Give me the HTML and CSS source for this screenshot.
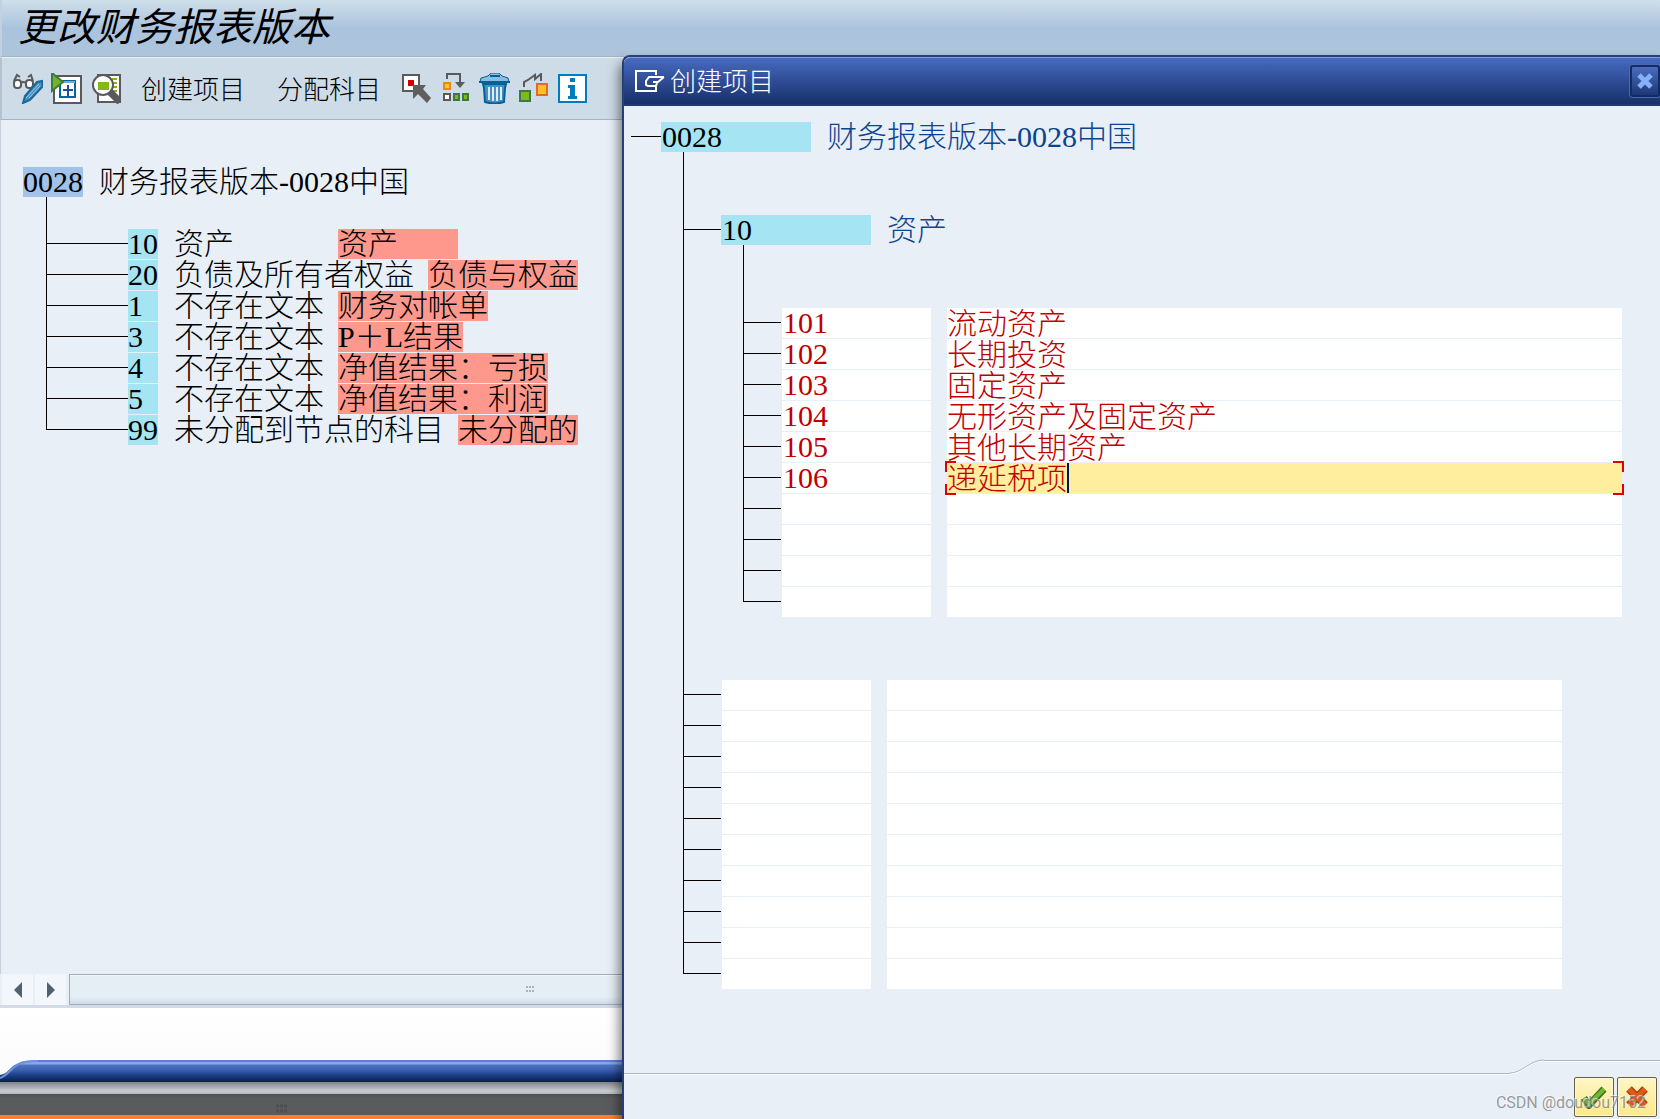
FILE: index.html
```html
<!DOCTYPE html>
<html lang="zh-CN">
<head>
    <meta charset="UTF-8">
    <meta name="viewport" content="width=device-width, initial-scale=1.0">
    <title>更改财务报表版本</title>
    <link rel="stylesheet" href="styles.css">
</head>
<body>
    <!-- Main window -->
    <main class="window">
        <h1 class="window-title">更改财务报表版本</h1>
        <div class="toolbar">
            <button type="button" class="icon-button" aria-label="显示/更改">
                <svg width="31" height="31" viewBox="0 0 31 31" fill="none">
                    <g stroke="#5a5a5a" stroke-width="2"><rect x="2" y="7" width="7" height="8" rx="3" fill="#fff"/><rect x="14" y="7" width="7" height="8" rx="3" fill="#fff"/><path d="M9 10q2-2 5 0M2 8l3-6 3 2M21 8l-2-6-3 2"/></g>
                    <path d="M11 30l2-7L25 9l5-1 1 5-13 14z" fill="#4a90bf" stroke="#1a679c" stroke-width="2"/>
                    <path d="M14 25L27 11M17 25l11-12" stroke="#9cc9e4"/>
                </svg>
            </button>
            <button type="button" class="icon-button" aria-label="展开">
                <svg width="31" height="31" viewBox="0 0 31 31">
                    <path d="M3 3h27v27H3z" fill="#fff" stroke="#5a5a5a" stroke-width="2"/>
                    <path d="M9 8h15v16H9z" fill="#fff" stroke="#0068a0" stroke-width="2"/>
                    <path d="M9 8h15v2H9z" fill="#7da7d9"/>
                    <path d="M16 12h2v4h4v2h-4v5h-2v-5h-4v-2h4z" fill="#1d4fa0"/>
                    <path d="M1 0l11 9L1 18z" fill="#72b32a" stroke="#3f7a3f" stroke-width="2"/>
                </svg>
            </button>
            <button type="button" class="icon-button" aria-label="查找">
                <svg width="31" height="31" viewBox="0 0 31 31">
                    <path d="M8 2h22v27H8z" fill="#fff" stroke="#5a5a5a" stroke-width="2"/>
                    <path d="M22 6h5M22 10h5M22 14h5M22 18h5" stroke="#83b81a" stroke-width="2"/>
                    <path d="M19 18l11 11" stroke="#5a5a5a" stroke-width="7"/>
                    <circle cx="13" cy="12" r="10" fill="#fff" stroke="#5a5a5a" stroke-width="2"/>
                    <path d="M8 9h11v8H8z" fill="#83b81a"/>
                </svg>
            </button>
            <button type="button" class="text-button">创建项目</button>
            <button type="button" class="text-button">分配科目</button>
            <button type="button" class="icon-button" aria-label="选择">
                <svg width="31" height="31" viewBox="0 0 31 31">
                    <path d="M2 2h16v16H2z" fill="#fff" stroke="#5a5a5a" stroke-width="2"/>
                    <path d="M7 7h6v6H7z" fill="#d00000"/>
                    <path d="M12 12h13l-3 4 8 9-4 5-9-9-5 5z" fill="#5f5f5f"/>
                </svg>
            </button>
            <button type="button" class="icon-button" aria-label="重新分配">
                <svg width="31" height="31" viewBox="0 0 31 31" fill="none">
                    <path d="M7 6V1h13v9" stroke="#5a5a5a" stroke-width="2"/>
                    <path d="M15 9h10l-5 6z" fill="#5a5a5a"/>
                    <path d="M4 10h6v6H4z" fill="#ffc830" stroke="#ef8a00" stroke-width="2"/>
                    <path d="M4 21h6v6H4z" fill="#fff" stroke="#5a5a5a" stroke-width="2"/>
                    <path d="M14 21h5v6h-5zM23 21h5v6h-5z" fill="#83b81a" stroke="#3a7a3a" stroke-width="2"/>
                </svg>
            </button>
            <button type="button" class="icon-button" aria-label="删除">
                <svg width="31" height="31" viewBox="0 0 31 31">
                    <path d="M4 11h23l-1 4-1 14q-9 3-19 0L5 15z" fill="#4b8fc0" stroke="#00629b" stroke-width="2"/>
                    <path d="M10 14v13M14 14v14M18 14v14M22 14v13" stroke="#d9eefa" stroke-width="2"/>
                    <path d="M1 9l1-4 7-2 3-3h8l3 3 6 2 1 4z" fill="#8fbbdc" stroke="#00629b" stroke-width="1"/>
                    <path d="M0 9h31M11 3h10" stroke="#00629b" stroke-width="2"/>
                </svg>
            </button>
            <button type="button" class="icon-button" aria-label="移动">
                <svg width="31" height="31" viewBox="0 0 31 31" fill="none">
                    <path d="M6 14V9l4-2 7-5v4l6-5v7" stroke="#5a5a5a" stroke-width="2"/>
                    <path d="M2 18h10v10H2z" fill="#83b81a" stroke="#3a7a4a" stroke-width="2"/>
                    <path d="M19 11h10v11H19z" fill="#ffc020" stroke="#e2692b" stroke-width="2"/>
                </svg>
            </button>
            <button type="button" class="icon-button" aria-label="信息">
                <svg width="31" height="31" viewBox="0 0 31 31">
                    <path d="M2 2h27v27H2z" fill="#fff" stroke="#007cc0" stroke-width="2"/>
                    <path d="M13 5h5v4h-5zM11 12h7v11h2v3h-9v-3h2v-8h-2z" fill="#007cc0"/>
                </svg>
            </button>
        </div>

        <!-- Statement version tree -->
        <section class="tree">
            <div class="tree-root"><span class="root-key">0028</span><span>财务报表版本-0028中国</span></div>
            <ul class="lines tree-lines">
                <li><i class="branch"></i><span class="key">10</span><span class="name">资产</span><span class="note">资产</span></li>
                <li><i class="branch"></i><span class="key">20</span><span class="name">负债及所有者权益</span><span class="note">负债与权益</span></li>
                <li><i class="branch"></i><span class="key">1</span><span class="name">不存在文本</span><span class="note">财务对帐单</span></li>
                <li><i class="branch"></i><span class="key">3</span><span class="name">不存在文本</span><span class="note">P＋L结果</span></li>
                <li><i class="branch"></i><span class="key">4</span><span class="name">不存在文本</span><span class="note">净值结果：亏损</span></li>
                <li><i class="branch"></i><span class="key">5</span><span class="name">不存在文本</span><span class="note">净值结果：利润</span></li>
                <li><i class="branch"></i><span class="key">99</span><span class="name">未分配到节点的科目</span><span class="note">未分配的</span></li>
            </ul>
        </section>

        <div class="scrollbar">
            <button type="button" class="scroll-button" aria-label="向左"><svg width="8" height="16" viewBox="0 0 8 16"><path d="M8 0v16L0 8z" fill="#4f626f"/></svg></button>
            <button type="button" class="scroll-button" aria-label="向右"><svg width="8" height="16" viewBox="0 0 8 16"><path d="M0 0v16l8-8z" fill="#4f626f"/></svg></button>
            <div class="scroll-track">
                <div class="scroll-thumb"><svg width="8" height="7" viewBox="0 0 8 7"><path d="M0 1h2M3 1h2M6 1h2M0 5h2M3 5h2M6 5h2" stroke="#a3b3c2" stroke-width="2"/></svg></div>
            </div>
        </div>
        <div class="message-area"></div>
        <div class="status-bar">
            <svg width="38" height="22" viewBox="0 0 38 22"><path d="M0 0h38C20 0 15 4 10 9 6 13 4 14 0 15z" fill="#fcfcfc"/><path d="M38 1C20 1 16 5 11 10 7 14 4 17 0 18" fill="none" stroke="#6f93da" stroke-width="2"/></svg>
        </div>
        <div class="status-shade"></div>
        <div class="taskbar"><svg width="12" height="9" viewBox="0 0 12 9"><path d="M0 2h12M0 7h12" stroke="#4e4f51" stroke-width="3" stroke-dasharray="3 1"/></svg></div>
    </main>

    <!-- Create items dialog -->
    <section class="dialog" role="dialog" aria-labelledby="dialogTitle">
        <header class="dialog-header">
            <svg width="30" height="22" viewBox="0 0 30 22" fill="none" stroke="#fff" stroke-width="2"><path d="M21 5V1H1v20h20v-4"/><path d="M29 7H14l-3 4v4l2 1h8l1-3M18 12h5l6-5"/></svg>
            <h2 id="dialogTitle">创建项目</h2>
            <button type="button" class="close-button" aria-label="关闭"><svg width="16" height="16" viewBox="0 0 16 16"><path d="M2 2l12 12M14 2L2 14" stroke="#86aefc" stroke-width="5"/></svg></button>
        </header>
        <div class="dialog-body">
            <div class="item"><i class="stub"></i><span class="item-key">0028</span><span class="item-name">财务报表版本-0028中国</span></div>
            <div class="trunk">
                <div class="item"><i class="arm"></i><span class="item-key">10</span><span class="item-name">资产</span></div>
                <ul class="lines entry-lines">
                    <li><i class="branch"></i><input class="code" aria-label="项目 1" value="101"><input class="text" aria-label="文本 1" value="流动资产"></li>
                    <li><i class="branch"></i><input class="code" aria-label="项目 2" value="102"><input class="text" aria-label="文本 2" value="长期投资"></li>
                    <li><i class="branch"></i><input class="code" aria-label="项目 3" value="103"><input class="text" aria-label="文本 3" value="固定资产"></li>
                    <li><i class="branch"></i><input class="code" aria-label="项目 4" value="104"><input class="text" aria-label="文本 4" value="无形资产及固定资产"></li>
                    <li><i class="branch"></i><input class="code" aria-label="项目 5" value="105"><input class="text" aria-label="文本 5" value="其他长期资产"></li>
                    <li><i class="branch"></i><input class="code" aria-label="项目 6" value="106"><div class="active-field"><input class="text" aria-label="文本 6" value="递延税项"><i class="caret"></i></div></li>
                    <li><i class="branch"></i><input class="code" aria-label="项目 7"><input class="text" aria-label="文本 7"></li>
                    <li><i class="branch"></i><input class="code" aria-label="项目 8"><input class="text" aria-label="文本 8"></li>
                    <li><i class="branch"></i><input class="code" aria-label="项目 9"><input class="text" aria-label="文本 9"></li>
                    <li><i class="branch"></i><input class="code" aria-label="项目 10"><input class="text" aria-label="文本 10"></li>
                </ul>
            </div>
            <ul class="lines sibling-lines">
                <li><i class="branch"></i><input class="code" aria-label="同级项目 1"><input class="text" aria-label="同级文本 1"></li>
                <li><i class="branch"></i><input class="code" aria-label="同级项目 2"><input class="text" aria-label="同级文本 2"></li>
                <li><i class="branch"></i><input class="code" aria-label="同级项目 3"><input class="text" aria-label="同级文本 3"></li>
                <li><i class="branch"></i><input class="code" aria-label="同级项目 4"><input class="text" aria-label="同级文本 4"></li>
                <li><i class="branch"></i><input class="code" aria-label="同级项目 5"><input class="text" aria-label="同级文本 5"></li>
                <li><i class="branch"></i><input class="code" aria-label="同级项目 6"><input class="text" aria-label="同级文本 6"></li>
                <li><i class="branch"></i><input class="code" aria-label="同级项目 7"><input class="text" aria-label="同级文本 7"></li>
                <li><i class="branch"></i><input class="code" aria-label="同级项目 8"><input class="text" aria-label="同级文本 8"></li>
                <li><i class="branch"></i><input class="code" aria-label="同级项目 9"><input class="text" aria-label="同级文本 9"></li>
                <li><i class="branch"></i><input class="code" aria-label="同级项目 10"><input class="text" aria-label="同级文本 10"></li>
            </ul>
        </div>
        <footer class="dialog-footer">
            <div class="footer-line"></div>
            <div class="footer-actions">
                <svg width="34" height="16" viewBox="0 0 34 16" fill="none"><path d="M0 15C12 15 20 2 34 2" stroke="#fff"/><path d="M0 14C12 14 20 1 34 1" stroke="#a9b8c8"/></svg>
                <div class="footer-buttons">
                    <button type="button" class="action" aria-label="继续"><svg width="26" height="24" viewBox="0 0 26 24"><path d="M3 13l5 7L23 4" fill="none" stroke="#39702b" stroke-width="7"/><path d="M3 13l5 6L23 4" fill="none" stroke="#72b82a" stroke-width="4"/></svg></button>
                    <button type="button" class="action" aria-label="取消"><svg width="24" height="24" viewBox="0 0 24 24"><path d="M4 4l16 16M20 4L4 20" stroke="#a5421b" stroke-width="8"/><path d="M4 4l16 16M20 4L4 20" stroke="#e25a16" stroke-width="5"/></svg></button>
                </div>
            </div>
        </footer>
        <span class="watermark">CSDN @doudou7152</span>
    </section>
</body>
</html>
```
FILE: styles.css
```css
* {
    box-sizing: border-box;
}
body {
    margin: 0;
    position: relative;
    min-height: 100vh;
    overflow: hidden;
    font-family: "Liberation Serif", "Noto Sans CJK SC", serif;
    font-size: 30px;
    font-weight: 300;
    line-height: 30px;
    color: #000;
    background: #e8eff6;
}
button, input {
    font: inherit;
    color: inherit;
    border: 0;
    margin: 0;
    padding: 0;
    background: none;
}
button {
    cursor: pointer;
}
svg {
    display: block;
    flex: none;
}
ul {
    list-style: none;
    margin: 0;
    padding: 0;
}

/* Main window */
.window {
    display: flex;
    flex-direction: column;
    min-height: 100vh;
}
.window-title {
    margin: 0;
    height: 57px;
    padding-left: 16px;
    font-size: 39px;
    font-weight: 400;
    font-style: italic;
    line-height: 55px;
    border-left: 2px solid #c3d0dd;
    border-bottom: 1px solid #a4b4c5;
    background: linear-gradient(#cfdeeb, #abc3dc 50%, #adc4dc);
}
.toolbar {
    display: flex;
    align-items: center;
    gap: 8px;
    height: 63px;
    padding-left: 10px;
    border-left: 2px solid #b5c3d1;
    border-top: 1px solid #e9f0f6;
    border-bottom: 1px solid #a4b4c5;
    background: #cedce8;
}
.icon-button {
    width: 31px;
    height: 31px;
}
.text-button {
    padding: 4px 12px 0;
    font-size: 26px;
}

/* Connector lines */
.lines {
    background: linear-gradient(#000, #000) 0 0 / 1px 62px no-repeat;
}
.lines li {
    display: flex;
    height: 31px;
}
.branch {
    flex: none;
    width: 39px;
    background:
        linear-gradient(#000, #000) 0 0 / 1px 100% no-repeat,
        linear-gradient(#000, #000) 0 14px / 38px 1px no-repeat;
}
li:last-child .branch {
    background-size: 1px 15px, 38px 1px;
}

/* Tree */
.tree {
    flex: 1;
    padding: 47px 0 0 22px;
    border-left: 1px solid #c5d0dc;
}
.tree-root {
    display: flex;
    gap: 16px;
}
.root-key {
    background: #a2c2ea;
}
.tree-lines {
    margin-left: 23px;
    padding-top: 32px;
    background-size: 1px 32px;
}
.tree-lines .branch {
    width: 82px;
    background-size: 1px 100%, 100% 1px;
}
.tree-lines li:last-child .branch {
    background-size: 1px 15px, 100% 1px;
}
.key, .name, .note {
    height: 30px;
    white-space: nowrap;
}
.key {
    width: 30px;
    margin-right: 16px;
    background: #a5e5f3;
}
.name {
    min-width: 150px;
    margin-right: 14px;
}
.note {
    min-width: 120px;
    background: #ff988c;
}

/* Scrollbar and bottom bars */
.scrollbar {
    display: flex;
    height: 34px;
    padding-left: 2px;
    gap: 2px;
    border-bottom: 3px solid #d5dbe6;
}
.scroll-button {
    display: flex;
    align-items: center;
    justify-content: center;
    width: 31px;
    height: 31px;
    background: #f3f6fa;
}
.scroll-track {
    flex: 1;
    margin-left: 1px;
}
.scroll-thumb {
    display: flex;
    align-items: center;
    justify-content: center;
    width: 58%;
    min-width: 600px;
    height: 31px;
    border: 1px solid #9dadbd;
    box-shadow: inset 0 1px #f6f9fc;
    background: linear-gradient(#e6eef5 75%, #cddce8);
}
.message-area {
    height: 52px;
    background: linear-gradient(#fff, #fcfcfc);
}
.status-bar {
    height: 22px;
    background: linear-gradient(#5f7fc9 0 2px, #86a8e8 2px 4px, #4f72c2 5px, #3d60b0 10px, #23458e 14px, #0a2356 21px);
}
.status-shade {
    height: 12px;
    background: linear-gradient(#828385, #c9ccd0 9px, #b7b9bb);
}
.taskbar {
    height: 25px;
    padding: 10px 0 0 276px;
    border-bottom: 4px solid #ff7f2f;
    background: linear-gradient(#4d4e50, #5a5b5d 4px);
}

/* Dialog */
.dialog {
    position: absolute;
    top: 55px;
    right: 0;
    bottom: 0;
    left: 622px;
    display: flex;
    flex-direction: column;
    border: 2px solid #273f75;
    border-right: 0;
    border-bottom: 0;
    border-radius: 8px 0 0 0;
    background: #e8eff6;
    box-shadow: -3px 8px 12px rgba(0, 0, 0, 0.5);
}
.dialog-header {
    display: flex;
    align-items: center;
    gap: 5px;
    height: 49px;
    padding-left: 11px;
    color: #fff;
    border-top: 1px solid #7f9fdc;
    border-bottom: 2px solid #233a70;
    border-radius: 6px 0 0 0;
    background: linear-gradient(#476ac0, #17306b);
}
.dialog-header h2 {
    flex: 1;
    margin: 0;
    padding-top: 4px;
    font-size: 26px;
    font-weight: 300;
}
.close-button {
    display: flex;
    align-items: center;
    justify-content: center;
    width: 30px;
    height: 32px;
    border: 2px solid #132c65;
    border-radius: 3px;
    box-shadow: 0 0 0 1px #4a69ae;
    background: linear-gradient(#4a6cbb, #1c3776);
}
.dialog-body {
    flex: 1;
    padding: 16px 0 0 7px;
}
.item {
    display: flex;
    height: 30px;
}
.stub, .arm {
    flex: none;
    background: linear-gradient(#000, #000) 0 14px / 100% 1px no-repeat;
}
.stub {
    width: 30px;
}
.arm {
    width: 37px;
}
.item-key {
    width: 150px;
    padding-left: 1px;
    background: #a5e5f3;
}
.item-name {
    margin-left: 16px;
    color: #0b4490;
}
.trunk {
    margin-left: 52px;
    padding: 63px 0 62px;
    border-left: 1px solid #000;
}
.entry-lines {
    margin: 0 38px 0 59px;
    padding-top: 63px;
    background-size: 1px 63px;
}
.sibling-lines {
    margin: 0 98px 0 52px;
    background: none;
}
.code, .text {
    height: 30px;
    padding-left: 1px;
    color: #c00000;
    background: #fff;
    border-radius: 0;
}
.code {
    flex: none;
    width: 149px;
    margin-right: 16px;
}
.text {
    flex: 1;
    min-width: 0;
    padding: 0 0 4px;
}
.active-field {
    position: relative;
    display: flex;
    flex: 1;
}
.active-field .text {
    background: #ffee9e;
}
/* Red corner brackets round the focused field */
.active-field::after {
    content: "";
    position: absolute;
    inset: -2px -2px -1px;
    pointer-events: none;
    background:
        linear-gradient(#e00000, #e00000) 0 0 / 11px 2px,
        linear-gradient(#e00000, #e00000) 0 0 / 2px 11px,
        linear-gradient(#e00000, #e00000) 100% 0 / 11px 2px,
        linear-gradient(#e00000, #e00000) 100% 0 / 2px 11px,
        linear-gradient(#e00000, #e00000) 0 100% / 11px 2px,
        linear-gradient(#e00000, #e00000) 0 100% / 2px 11px,
        linear-gradient(#e00000, #e00000) 100% 100% / 11px 2px,
        linear-gradient(#e00000, #e00000) 100% 100% / 2px 11px;
    background-repeat: no-repeat;
}
.caret {
    position: absolute;
    top: 0;
    left: 120px;
    width: 2px;
    height: 30px;
    background: #04125a;
}

/* Dialog footer */
.dialog-footer {
    display: flex;
    height: 60px;
}
.footer-line {
    flex: 1;
    margin-top: 14px;
    border-top: 1px solid #a9b8c8;
    box-shadow: inset 0 1px #fff;
}
.footer-actions {
    display: flex;
}
.footer-buttons {
    display: flex;
    gap: 3px;
    margin-top: 1px;
    padding: 16px 3px 0 30px;
    border-top: 1px solid #a9b8c8;
    box-shadow: inset 0 1px #fff;
}
.action {
    display: flex;
    align-items: center;
    justify-content: center;
    width: 40px;
    height: 40px;
    border: 1px solid #66604a;
    border-radius: 2px;
    box-shadow: inset 0 0 0 1px #fff8d0;
    background: linear-gradient(#fff6c4, #fde88c);
}
.watermark {
    position: absolute;
    right: 14px;
    bottom: 7px;
    font: 16px/18px Roboto, "Liberation Sans", sans-serif;
    color: rgba(130, 130, 130, 0.8);
    text-shadow: -1px -1px rgba(255, 255, 255, 0.6);
    pointer-events: none;
}
```
